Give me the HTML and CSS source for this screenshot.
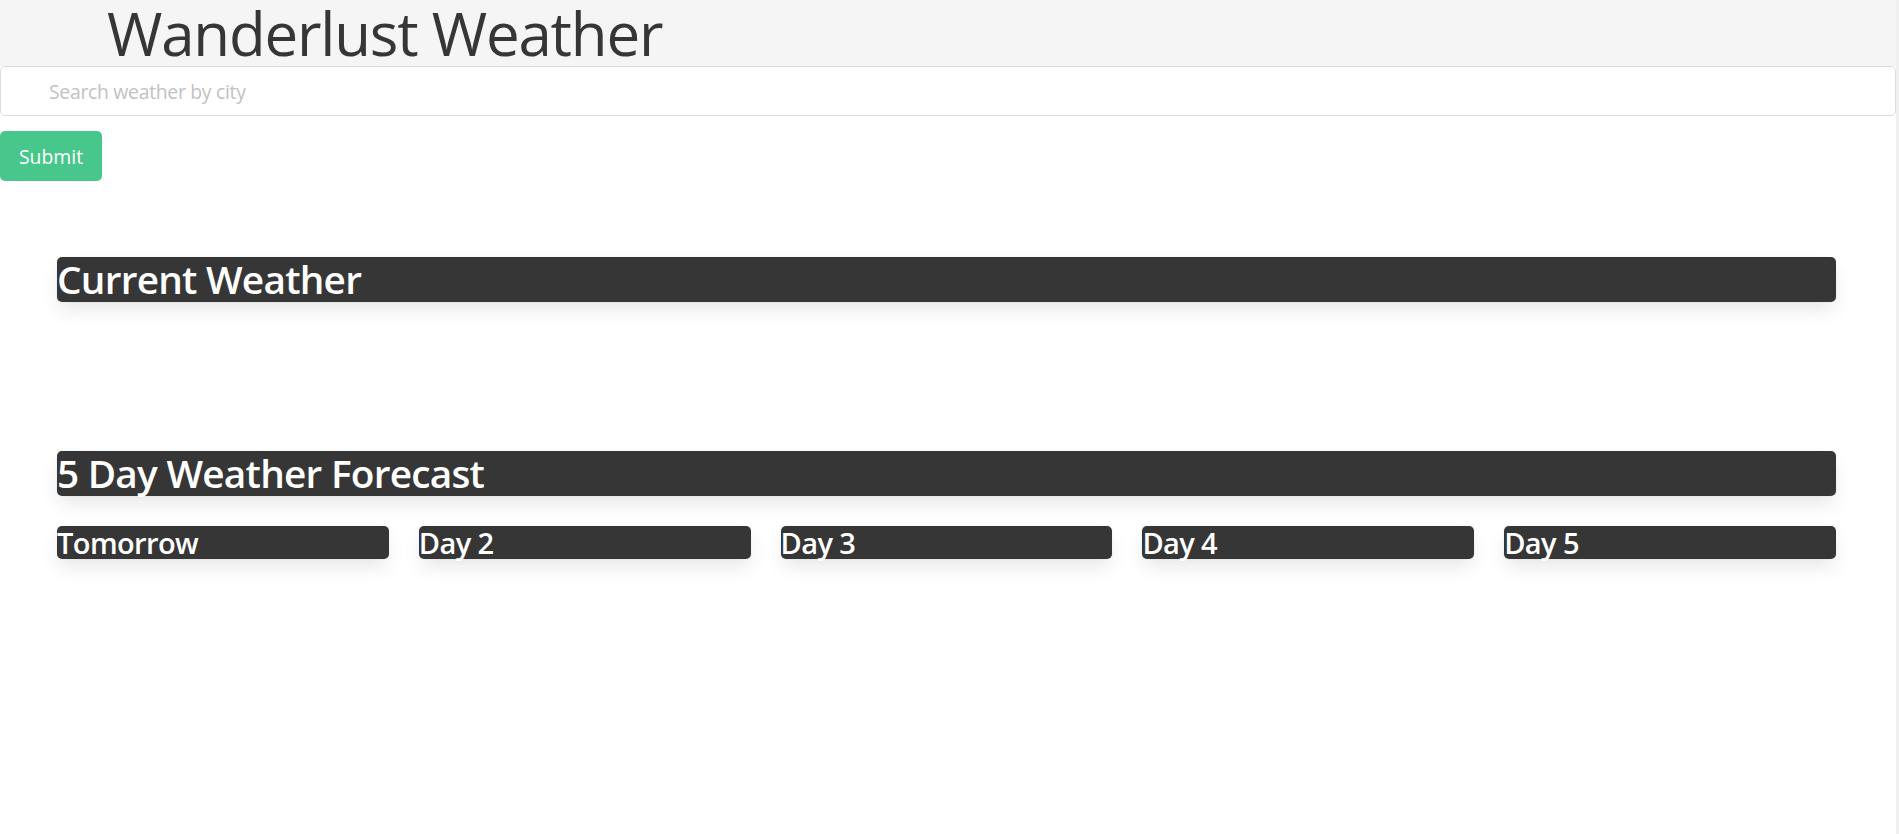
FILE: index.html
```html
<!DOCTYPE html>
<html lang="en">
<head>
<meta charset="utf-8">
<title>Wanderlust Weather</title>
<link rel="stylesheet" href="styles.css">
</head>
<body>
<div class="page">
  <header class="hero">
    <h1 class="site-title">Wanderlust Weather</h1>
  </header>
  <form class="search">
    <div class="field">
      <input class="input" type="text" placeholder="Search weather by city">
    </div>
    <div class="field">
      <button class="button" type="button">Submit</button>
    </div>
  </form>
  <main class="content">
    <section class="current">
      <div class="box box-lg"><h2 class="box-title">Current Weather</h2></div>
    </section>
    <section class="forecast">
      <div class="box box-lg"><h2 class="box-title">5 Day Weather Forecast</h2></div>
      <div class="days">
        <div class="box box-sm"><h3 class="day-title">Tomorrow</h3></div>
        <div class="box box-sm"><h3 class="day-title">Day 2</h3></div>
        <div class="box box-sm"><h3 class="day-title">Day 3</h3></div>
        <div class="box box-sm"><h3 class="day-title">Day 4</h3></div>
        <div class="box box-sm"><h3 class="day-title">Day 5</h3></div>
      </div>
    </section>
  </main>
</div>
</body>
</html>
```
FILE: styles.css
```css
html {
  background: #f0f0f0;
}
body {
  margin: 0;
  font-family: "Open Sans", "Noto Sans", "Liberation Sans", sans-serif;
  color: #4a4a4a;
}
.page {
  width: 1896px;
  min-height: 834px;
  background: #fff;
}
.hero {
  background: #f5f5f5;
  height: 66px;
}
.site-title {
  margin: 0;
  padding-left: 107px;
  font-size: 60px;
  line-height: 66px;
  font-weight: 400;
  letter-spacing: -1.2px;
  color: #363636;
}
.search {
  margin: 0;
}
.field {
  display: flex;
}
.input {
  box-sizing: border-box;
  width: 1896px;
  height: 50px;
  margin: 0;
  padding: 0 10px 0 48px;
  border: 1px solid #dbdbdb;
  border-radius: 5px;
  font-family: inherit;
  font-size: 19.4px;
  letter-spacing: -0.3px;
  color: #363636;
  background: #fff;
  outline: none;
}
.input::placeholder {
  color: #c2c2c2;
}
.button {
  box-sizing: border-box;
  margin-top: 15px;
  width: 102px;
  height: 50px;
  padding: 0;
  border: 1px solid transparent;
  border-radius: 5px;
  background: #48c78c;
  color: #fff;
  font-family: inherit;
  font-size: 19.4px;
  cursor: pointer;
}
.content {
  padding: 76px 60px 0 57px;
}
.box {
  background: #363636;
  border-radius: 5px;
  box-shadow: 0 9.7px 19.4px -2.4px rgba(10, 10, 10, 0.1), 0 0 0 1px rgba(10, 10, 10, 0.02);
  color: #fff;
}
.box-lg {
  height: 45px;
}
.box-title {
  margin: 0;
  font-size: 38.75px;
  line-height: 45px;
  font-weight: 600;
  letter-spacing: -0.75px;
}
.forecast {
  margin-top: 149px;
}
.days {
  display: flex;
  gap: 30px;
  margin-top: 30px;
}
.box-sm {
  flex: 1;
  height: 33px;
}
.day-title {
  margin: 0;
  font-size: 29px;
  line-height: 33px;
  font-weight: 600;
  letter-spacing: -0.6px;
}
```
